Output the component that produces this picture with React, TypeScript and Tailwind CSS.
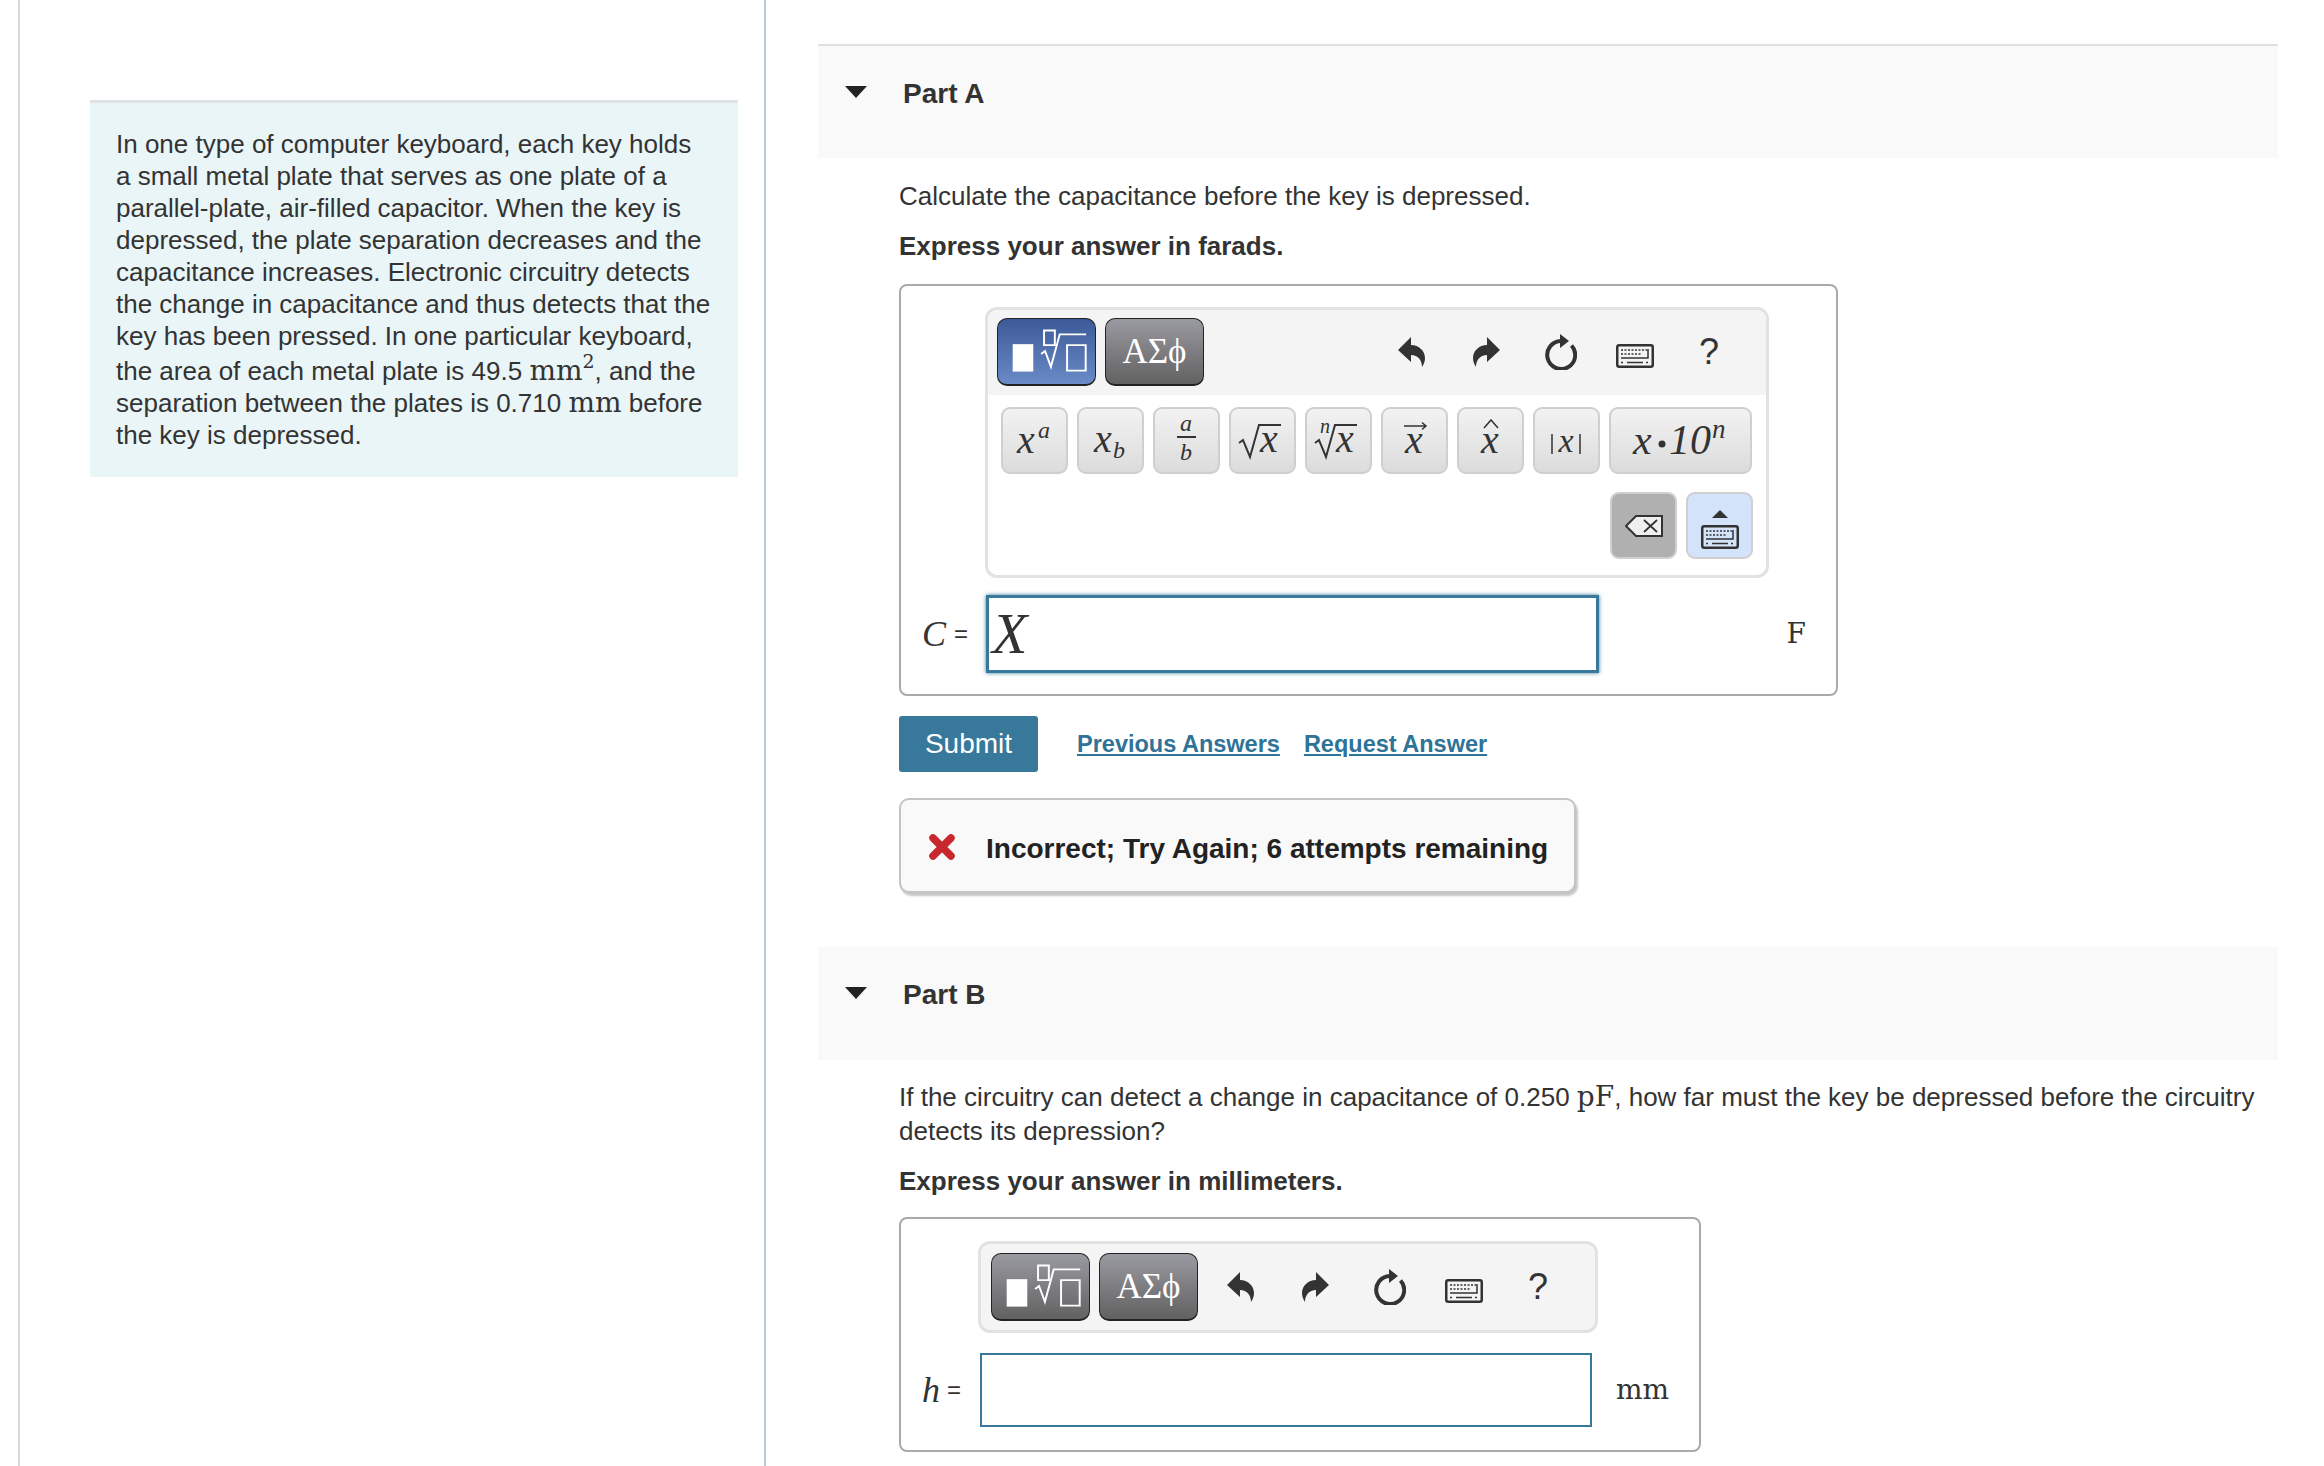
const serif = "font-['Liberation_Serif',serif]";
const unit = "font-['DejaVu_Serif',serif]";

const UndoIcon = ({ flip = false }: { flip?: boolean }) => (
  <svg width="27" height="30" viewBox="0 0 27 30" className={flip ? "-scale-x-100" : ""}>
    <path d="M0 13 L13 0 V8 C21 8 27 14 27 21 C27 24 26 27 24 30 C24 23 20 18 13 18 V25 Z" fill="#333" />
  </svg>
);

const ResetIcon = () => (
  <svg width="32" height="36" viewBox="0 0 32 36">
    <path d="M16 7 A14 14 0 1 0 26.5 11.5" fill="none" stroke="#333" strokeWidth="4" />
    <path d="M15 0 L24 7 L15 14 Z" fill="#333" />
  </svg>
);

const KeyboardIcon = () => (
  <svg width="38" height="24" viewBox="0 0 38 24">
    <rect x="1.25" y="1.25" width="35.5" height="21.5" rx="2" fill="none" stroke="#333" strokeWidth="2.5" />
    <path d="M5 6 H31 M5 10 H25 M5 18.5 H8 M30 18.5 H33" stroke="#333" strokeWidth="1.5" strokeDasharray="2 1.5" />
    <path d="M32 5 V14 H5 M11 18.5 H27" fill="none" stroke="#333" strokeWidth="1.5" />
  </svg>
);

const TemplateIcon = () => (
  <svg width="99" height="68" viewBox="0 0 99 68">
    <rect x="15" y="26" width="21" height="28" fill="#fff" />
    <path d="M47 12 H58 V27 H47 Z M70.5 27 H89.5 V53 H70.5 Z" fill="none" stroke="#fff" strokeWidth="2" />
    <path d="M44 36 L48 33 L54 49 L63 16 H90" fill="none" stroke="#fff" strokeWidth="2" />
  </svg>
);

const ModeButton = ({ active, children }: { active?: boolean; children: React.ReactNode }) => (
  <div
    className={`flex h-[68px] w-[99px] items-center justify-center rounded-[10px] border-b-2 border-x border-t border-[#222] bg-linear-to-b ${
      active ? "from-[#3d5a98] to-[#6a8bc7]" : "from-[#9a9aa2] to-[#626262]"
    }`}
  >
    {children}
  </div>
);

const Tools = ({ lead }: { lead: string }) => (
  <div className={`flex items-center ${lead}`}>
    <div className="flex w-[75px] justify-center"><UndoIcon /></div>
    <div className="flex w-[75px] justify-center"><UndoIcon flip /></div>
    <div className="flex w-[74px] justify-center"><ResetIcon /></div>
    <div className="flex w-[74px] justify-center pt-2"><KeyboardIcon /></div>
    <div className="flex w-[74px] justify-center text-[36px] text-[#333] font-['Liberation_Sans',sans-serif]">?</div>
  </div>
);

const ModeButtons = ({ active }: { active?: boolean }) => (
  <div className="flex gap-[9px]">
    <ModeButton active={active}>
      <TemplateIcon />
    </ModeButton>
    <ModeButton>
      <span className={`${serif} text-[35px] leading-none text-white`}>ΑΣϕ</span>
    </ModeButton>
  </div>
);

const Key = ({ wide, children }: { wide?: boolean; children: React.ReactNode }) => (
  <div
    className={`h-[67px] ${wide ? "w-[143px]" : "w-[67px]"} rounded-[9px] border-2 border-[#cfcfcf] bg-linear-to-b from-[#f2f2f2] to-[#dcdcdc]`}
  >
    {children}
  </div>
);

const MathGlyph = ({ w = 63, children }: { w?: number; children: React.ReactNode }) => (
  <svg width={w} height="63" viewBox={`2 2 ${w} 63`} fontFamily="Liberation Serif" fontStyle="italic" fill="#333">
    {children}
  </svg>
);

const Palette = () => (
  <div className="bg-white pl-[13px] pr-[12px] pt-[12px]">
    <div className="flex gap-[9px]">
      <Key><MathGlyph><text x="16" y="46" fontSize="40">x</text><text x="37" y="31" fontSize="24">a</text></MathGlyph></Key>
      <Key><MathGlyph><text x="17" y="45" fontSize="40">x</text><text x="36" y="51" fontSize="24">b</text></MathGlyph></Key>
      <Key>
        <MathGlyph>
          <text x="33" y="24" fontSize="24" textAnchor="middle">a</text>
          <path d="M24 30 H43" stroke="#333" strokeWidth="2" />
          <text x="33" y="53" fontSize="24" textAnchor="middle">b</text>
        </MathGlyph>
      </Key>
      <Key>
        <MathGlyph>
          <path d="M10 36 L14 33 L21 50 L30 18 H52" fill="none" stroke="#333" strokeWidth="2" />
          <text x="31" y="45" fontSize="40">x</text>
        </MathGlyph>
      </Key>
      <Key>
        <MathGlyph>
          <text x="15" y="26" fontSize="20">n</text>
          <path d="M10 36 L14 33 L21 50 L30 18 H52" fill="none" stroke="#333" strokeWidth="2" />
          <text x="31" y="45" fontSize="40">x</text>
        </MathGlyph>
      </Key>
      <Key>
        <MathGlyph>
          <path d="M23 19 H45 M41 15.5 L45 19 L41 22.5" fill="none" stroke="#333" strokeWidth="1.5" />
          <text x="33" y="46" fontSize="40" textAnchor="middle">x</text>
        </MathGlyph>
      </Key>
      <Key>
        <MathGlyph>
          <path d="M27 21 L34 13 L41 21" fill="none" stroke="#333" strokeWidth="1.5" />
          <text x="33" y="46" fontSize="40" textAnchor="middle">x</text>
        </MathGlyph>
      </Key>
      <Key>
        <MathGlyph>
          <path d="M19 27 V47 M47 27 V47" stroke="#333" strokeWidth="1.5" />
          <text x="33" y="45" fontSize="34" textAnchor="middle">x</text>
        </MathGlyph>
      </Key>
      <Key wide>
        <MathGlyph w={139}>
          <text x="24" y="47" fontSize="42">x</text>
          <circle cx="53" cy="37" r="3.5" />
          <text x="60" y="47" fontSize="42">10</text>
          <text x="103" y="31" fontSize="27">n</text>
        </MathGlyph>
      </Key>
    </div>
    <div className="mt-[18px] flex justify-end gap-[9px] pr-[1px]">
      <div className="flex h-[67px] w-[67px] items-center justify-center rounded-[9px] border-2 border-[#cfcfcf] bg-[#b0b0b0]">
        <svg width="38" height="24" viewBox="0 0 38 24">
          <path d="M1 12 L11 2 H37 V22 H11 Z" fill="#efefef" stroke="#333" strokeWidth="2" />
          <path d="M19 6 L32 18 M32 6 L19 18" stroke="#333" strokeWidth="1.75" />
        </svg>
      </div>
      <div className="flex h-[67px] w-[67px] flex-col items-center justify-center gap-[7px] rounded-[9px] border-2 border-[#cfcfcf] bg-[#d2e3fa] pt-[8px]">
        <svg width="16" height="8" viewBox="0 0 16 8"><path d="M8 0 L16 8 H0 Z" fill="#333" /></svg>
        <KeyboardIcon />
      </div>
    </div>
  </div>
);

const PartHeader = ({ title, line }: { title: string; line?: boolean }) => (
  <div className={`flex h-[113px] items-start bg-[#f9f9f9] pl-[27px] pt-[32px] ${line ? "border-t-2 border-[#e0e0e0] h-[114px]" : ""}`}>
    <svg width="22" height="12" viewBox="0 0 22 12" className="mt-[8px]"><path d="M0 0 H22 L11 12 Z" fill="#222" /></svg>
    <h2 className="ml-[36px] text-[28px] font-bold leading-[32px] text-[#333]">{title}</h2>
  </div>
);

const App = () => (
  <div className="flex h-[1466px] overflow-hidden bg-white pl-[18px] text-[26px] leading-[32px] text-[#333] font-['Liberation_Sans',sans-serif]">
    <aside className="h-full w-[748px] shrink-0 border-l-2 border-r-2 border-l-[#d9d9d9] border-r-[#b9c9dc] pl-[70px] pt-[100px]">
      <div className="h-[377px] w-[648px] border-t-[3px] border-[#e0e3e4] bg-[#e9f5f7] px-[26px] pt-[25px]">
        <p>
          In one type of computer keyboard, each key holds a small metal plate that serves as one plate of a
          parallel-plate, air-filled capacitor. When the key is depressed, the plate separation decreases and the
          capacitance increases. Electronic circuitry detects the change in capacitance and thus detects that the
          key has been pressed. In one particular keyboard, the area of each metal plate is 49.5{" "}
          <span className={`${unit} text-[28px]`}>mm<sup className="top-0 align-[12px] text-[19px] leading-none">2</sup></span>, and the separation between the plates
          is 0.710 <span className={`${unit} text-[28px]`}>mm</span> before the key is depressed.
        </p>
      </div>
    </aside>

    <main className="w-[1512px] pl-[52px] pt-[44px]">
      <PartHeader title="Part A" line />
      <div className="pl-[81px]">
        <p className="mt-[22px]">Calculate the capacitance before the key is depressed.</p>
        <p className="mt-[18px] font-bold">Express your answer in farads.</p>

        <div className="mt-[22px] h-[412px] w-[939px] rounded-[8px] border-2 border-[#aaaaaa] pt-[21px]">
          <div className="ml-[84px] h-[271px] w-[784px] overflow-hidden rounded-[12px] border-[3px] border-[#e2e2e2] bg-white">
            <div className="flex h-[85px] items-start bg-[#f4f4f4] pl-[9px] pt-[8px]">
              <ModeButtons active />
              <Tools lead="ml-[170px] h-[68px]" />
            </div>
            <Palette />
          </div>
          <div className="mt-[17px] flex items-center pl-[21px] pr-[30px]">
            <span className="flex w-[64px] shrink-0 items-center gap-[8px] text-[24px]"><i className={`${serif} text-[36px]`}>C</i> =</span>
            <div className={`flex h-[78px] w-[613px] items-center border-[3px] border-[#38789a] pl-[3px] shadow-[0_0_4px_#38789a] ${serif} text-[58px] italic`}>X</div>
            <span className={`ml-auto ${unit} text-[28px]`}>F</span>
          </div>
        </div>

        <div className="mt-[20px] flex items-center">
          <button className="h-[56px] w-[139px] rounded-[3px] bg-[#38789a] text-[28px] text-white">Submit</button>
          <a className="ml-[39px] text-[23.5px] font-bold text-[#2e7398] underline">Previous Answers</a>
          <a className="ml-[24px] text-[23.5px] font-bold text-[#2e7398] underline">Request Answer</a>
        </div>

        <div className="mt-[26px] flex h-[95px] w-[677px] items-center rounded-[10px] border-2 border-[#c4c4c4] bg-[#f9f9f9] pl-[27px] shadow-[2px_3px_2px_#c8c8c8]">
          <svg width="28" height="26" viewBox="0 0 28 26" className="mt-[2px]">
            <path d="M5 4 L23 22 M23 4 L5 22" stroke="#c8282d" strokeWidth="7.5" strokeLinecap="round" />
          </svg>
          <span className="ml-[30px] pt-[6px] text-[28px] font-bold text-[#222]">Incorrect; Try Again; 6 attempts remaining</span>
        </div>
      </div>

      <div className="mt-[54px]">
        <PartHeader title="Part B" />
      </div>
      <div className="pl-[81px] pr-[16px]">
        <p className="mt-[20px] leading-[34px]">
          If the circuitry can detect a change in capacitance of 0.250 <span className={`${unit} text-[28px]`}>pF</span>, how far must the key be
          depressed before the circuitry detects its depression?
        </p>
        <p className="mt-[17px] font-bold">Express your answer in millimeters.</p>

        <div className="mt-[20px] h-[235px] w-[802px] rounded-[8px] border-2 border-[#aaaaaa] pt-[22px]">
          <div className="ml-[77px] flex h-[92px] w-[620px] items-center rounded-[12px] border-[3px] border-[#e2e2e2] bg-[#f4f4f4] pl-[10px]">
            <ModeButtons />
            <Tools lead="ml-[5px]" />
          </div>
          <div className="mt-[20px] flex items-center pl-[21px]">
            <span className="flex w-[58px] shrink-0 items-center gap-[7px] text-[24px]"><i className={`${serif} text-[36px]`}>h</i> =</span>
            <div className="h-[74px] w-[612px] border-2 border-[#38789a]" />
            <span className={`ml-[24px] ${unit} text-[28px]`}>mm</span>
          </div>
        </div>
      </div>
    </main>
  </div>
);

export default App;
